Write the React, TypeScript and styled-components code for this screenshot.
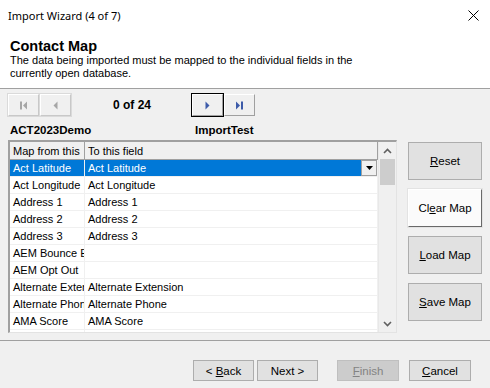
import React from 'react';
import styled, { createGlobalStyle } from 'styled-components';

const GlobalStyle = createGlobalStyle`
  html, body {
    margin: 0;
    padding: 0;
    background: #f0f0f0;
  }
  body {
    font-family: 'Liberation Sans', Arial, sans-serif;
    font-size: 11px;
    color: #000;
  }
`;

const Window = styled.div`
  width: 490px;
  height: 388px;
  display: flex;
  flex-direction: column;
  background: #f0f0f0;
  overflow: hidden;
`;

const TitleBar = styled.div`
  height: 30px;
  display: flex;
  align-items: center;
  justify-content: space-between;
  padding: 0 8px 0 8px;
  background: #fff;
  font-family: 'Noto Sans', 'Open Sans', sans-serif;
  font-size: 11px;
`;

const CloseBox = styled.div`
  width: 30px;
  height: 30px;
  display: flex;
  align-items: center;
  justify-content: center;
  margin-right: -6px;
`;

const Header = styled.div`
  height: 59px;
  background: #fff;
  padding: 8px 10px 0 10px;
  box-sizing: border-box;
  border-bottom: 1px solid #a0a0a0;
`;

const HeaderTitle = styled.div`
  font-weight: bold;
  font-size: 14.5px;
  line-height: 16px;
`;

const HeaderText = styled.div`
  font-size: 11px;
  line-height: 13px;
  width: 350px;
`;

const Body = styled.div`
  padding: 5px 8px 0 8px;
  display: flex;
  flex-direction: column;
`;

const NavRow = styled.div`
  display: flex;
  align-items: center;
  height: 22px;
`;

const NavButton = styled.div<{ $focused?: boolean; $disabled?: boolean }>`
  width: 31px;
  height: 22px;
  box-sizing: border-box;
  display: flex;
  align-items: center;
  justify-content: center;
  margin-right: 1px;
  background: #f0f0f0;
  border-top: 1px solid #fff;
  border-left: 1px solid #fff;
  border-right: 1px solid ${p => (p.$disabled ? '#c8c8c8' : '#a0a0a0')};
  border-bottom: 1px solid ${p => (p.$disabled ? '#c8c8c8' : '#a0a0a0')};
  box-shadow: ${p => (p.$focused ? '0 0 0 1px #000' : 'none')};
  outline: ${p => (p.$disabled ? '1px solid #dadada' : 'none')};
`;

const Counter = styled.div`
  width: 120px;
  text-align: center;
  font-weight: bold;
  font-size: 12px;
`;

const Labels = styled.div`
  display: flex;
  height: 24px;
  align-items: flex-end;
  padding: 0 0 4px 2px;
  box-sizing: border-box;
  font-weight: bold;
  font-size: 11.5px;
`;

const LabelCell = styled.div<{ $w: number }>`
  width: ${p => p.$w}px;
`;

const MainRow = styled.div`
  display: flex;
  gap: 11px;
`;

const Grid = styled.div`
  width: 390px;
  height: 193px;
  box-sizing: border-box;
  border-top: 2px solid #a0a0a0;
  border-left: 2px solid #a0a0a0;
  border-right: 1px solid #e3e3e3;
  border-bottom: 1px solid #e3e3e3;
  background: #fff;
  display: flex;
  overflow: hidden;
`;

const GridBody = styled.div`
  flex: 1;
  display: flex;
  flex-direction: column;
  overflow: hidden;
`;

const Row = styled.div<{ $head?: boolean; $selected?: boolean }>`
  display: grid;
  grid-template-columns: 75px 1fr;
  height: ${p => (p.$head ? 18 : 17)}px;
  flex: none;
  box-sizing: border-box;
  border-bottom: 1px solid ${p => (p.$head ? '#a0a0a0' : '#f0f0f0')};
  background: ${p => (p.$head ? '#f0f0f0' : p.$selected ? '#0078d7' : '#fff')};
  color: ${p => (p.$selected ? '#fff' : '#000')};
`;

const Cell = styled.div<{ $head?: boolean }>`
  display: flex;
  align-items: center;
  padding-left: 3px;
  white-space: nowrap;
  overflow: hidden;
  position: relative;
  border-right: 1px solid ${p => (p.$head ? '#a0a0a0' : '#f0f0f0')};
  font-size: 11px;
`;

const DropButton = styled.div`
  position: absolute;
  right: 0;
  top: 0;
  width: 16px;
  height: 16px;
  box-sizing: border-box;
  background: #f0f0f0;
  border: 1px solid #a0a0a0;
  display: flex;
  align-items: center;
  justify-content: center;
`;

const ScrollBar = styled.div`
  width: 17px;
  background: #f0f0f0;
  display: flex;
  flex-direction: column;
  border-left: 1px solid #e8e8e8;
`;

const ScrollArrow = styled.div`
  height: 17px;
  display: flex;
  align-items: center;
  justify-content: center;
`;

const ScrollTrack = styled.div`
  flex: 1;
  padding: 0 1px;
`;

const Thumb = styled.div`
  height: 26px;
  background: #cdcdcd;
`;

const SideButtons = styled.div`
  display: flex;
  flex-direction: column;
  gap: 9px;
  padding-top: 2px;
`;

const Button = styled.div<{ $w?: number; $h?: number; $light?: boolean; $disabled?: boolean }>`
  width: ${p => p.$w ?? 74}px;
  height: ${p => p.$h ?? 38}px;
  box-sizing: border-box;
  display: flex;
  align-items: center;
  justify-content: center;
  font-size: 11.5px;
  background: ${p => (p.$disabled ? '#cccccc' : p.$light ? '#fbfbfb' : '#e1e1e1')};
  color: ${p => (p.$disabled ? '#838383' : '#000')};
  border: 1px solid ${p => (p.$disabled ? '#bfbfbf' : '#adadad')};
  ${p =>
    p.$light
      ? 'border-color: #fff #696969 #696969 #fff; box-shadow: 0 0 0 1px #e3e3e3;'
      : ''}
`;

const Footer = styled.div`
  margin-top: 7px;
  border-top: 1px solid #a0a0a0;
  padding: 19px 0 0 193px;
  display: flex;
`;

const FooterGap = styled.div<{ $w: number }>`
  width: ${p => p.$w}px;
`;

const Ul = styled.span`
  text-decoration: underline;
`;

const Tri = ({ dir, color, bar }: { dir: 'l' | 'r'; color: string; bar?: boolean }) => (
  <svg width="9" height="9" viewBox="0 0 9 9">
    {dir === 'l' ? (
      <>
        {bar && <rect x="1" y="0.5" width="2" height="8" fill={color} />}
        <polygon points={bar ? '8,0.5 4,4.5 8,8.5' : '6.5,0.5 2.5,4.5 6.5,8.5'} fill={color} />
      </>
    ) : (
      <>
        <polygon points={bar ? '1,0.5 5,4.5 1,8.5' : '2.5,0.5 6.5,4.5 2.5,8.5'} fill={color} />
        {bar && <rect x="6" y="0.5" width="2" height="8" fill={color} />}
      </>
    )}
  </svg>
);

const rows: [string, string][] = [
  ['Act Latitude', 'Act Latitude'],
  ['Act Longitude', 'Act Longitude'],
  ['Address 1', 'Address 1'],
  ['Address 2', 'Address 2'],
  ['Address 3', 'Address 3'],
  ['AEM Bounce Email', ''],
  ['AEM Opt Out', ''],
  ['Alternate Extension', 'Alternate Extension'],
  ['Alternate Phone', 'Alternate Phone'],
  ['AMA Score', 'AMA Score'],
  ['', ''],
];

const App: React.FC = () => {
  return (
    <Window>
      <GlobalStyle />
      <TitleBar>
        <span>Import Wizard (4 of 7)</span>
        <CloseBox>
          <svg width="11" height="11" viewBox="0 0 11 11">
            <path d="M0.5 0.5 L10.5 10.5 M10.5 0.5 L0.5 10.5" stroke="#000" strokeWidth="1" />
          </svg>
        </CloseBox>
      </TitleBar>
      <Header>
        <HeaderTitle>Contact Map</HeaderTitle>
        <HeaderText>
          The data being imported must be mapped to the individual fields in the currently open database.
        </HeaderText>
      </Header>
      <Body>
        <NavRow>
          <NavButton $disabled>
            <Tri dir="l" bar color="#a6a6a6" />
          </NavButton>
          <NavButton $disabled>
            <Tri dir="l" color="#a6a6a6" />
          </NavButton>
          <Counter>0 of 24</Counter>
          <NavButton $focused>
            <Tri dir="r" color="#3d5ba9" />
          </NavButton>
          <NavButton>
            <Tri dir="r" bar color="#3d5ba9" />
          </NavButton>
        </NavRow>
        <Labels>
          <LabelCell $w={185}>ACT2023Demo</LabelCell>
          <LabelCell $w={120}>ImportTest</LabelCell>
        </Labels>
        <MainRow>
          <Grid>
            <GridBody>
              <Row $head>
                <Cell $head>Map from this</Cell>
                <Cell $head>To this field</Cell>
              </Row>
              {rows.map(([from, to], i) => (
                <Row key={i} $selected={i === 0}>
                  <Cell>{from}</Cell>
                  <Cell>
                    {to}
                    {i === 0 && (
                      <DropButton>
                        <svg width="7" height="4" viewBox="0 0 7 4">
                          <polygon points="0,0 7,0 3.5,4" fill="#000" />
                        </svg>
                      </DropButton>
                    )}
                  </Cell>
                </Row>
              ))}
            </GridBody>
            <ScrollBar>
              <ScrollArrow>
                <svg width="9" height="6" viewBox="0 0 9 6">
                  <path d="M1 5 L4.5 1.5 L8 5" stroke="#606060" strokeWidth="1.6" fill="none" />
                </svg>
              </ScrollArrow>
              <ScrollTrack>
                <Thumb />
              </ScrollTrack>
              <ScrollArrow>
                <svg width="9" height="6" viewBox="0 0 9 6">
                  <path d="M1 1 L4.5 4.5 L8 1" stroke="#606060" strokeWidth="1.6" fill="none" />
                </svg>
              </ScrollArrow>
            </ScrollBar>
          </Grid>
          <SideButtons>
            <Button>
              <span><Ul>R</Ul>eset</span>
            </Button>
            <Button $light>
              <span>Cl<Ul>e</Ul>ar Map</span>
            </Button>
            <Button>
              <span><Ul>L</Ul>oad Map</span>
            </Button>
            <Button>
              <span><Ul>S</Ul>ave Map</span>
            </Button>
          </SideButtons>
        </MainRow>
      </Body>
      <Footer>
        <Button $w={61} $h={21}>
          <span>&lt; <Ul>B</Ul>ack</span>
        </Button>
        <FooterGap $w={3} />
        <Button $w={61} $h={21}>
          <span>Next &gt;</span>
        </Button>
        <FooterGap $w={19} />
        <Button $w={62} $h={21} $disabled>
          <span><Ul>F</Ul>inish</span>
        </Button>
        <FooterGap $w={10} />
        <Button $w={62} $h={21}>
          <span><Ul>C</Ul>ancel</span>
        </Button>
      </Footer>
    </Window>
  );
};

export default App;
